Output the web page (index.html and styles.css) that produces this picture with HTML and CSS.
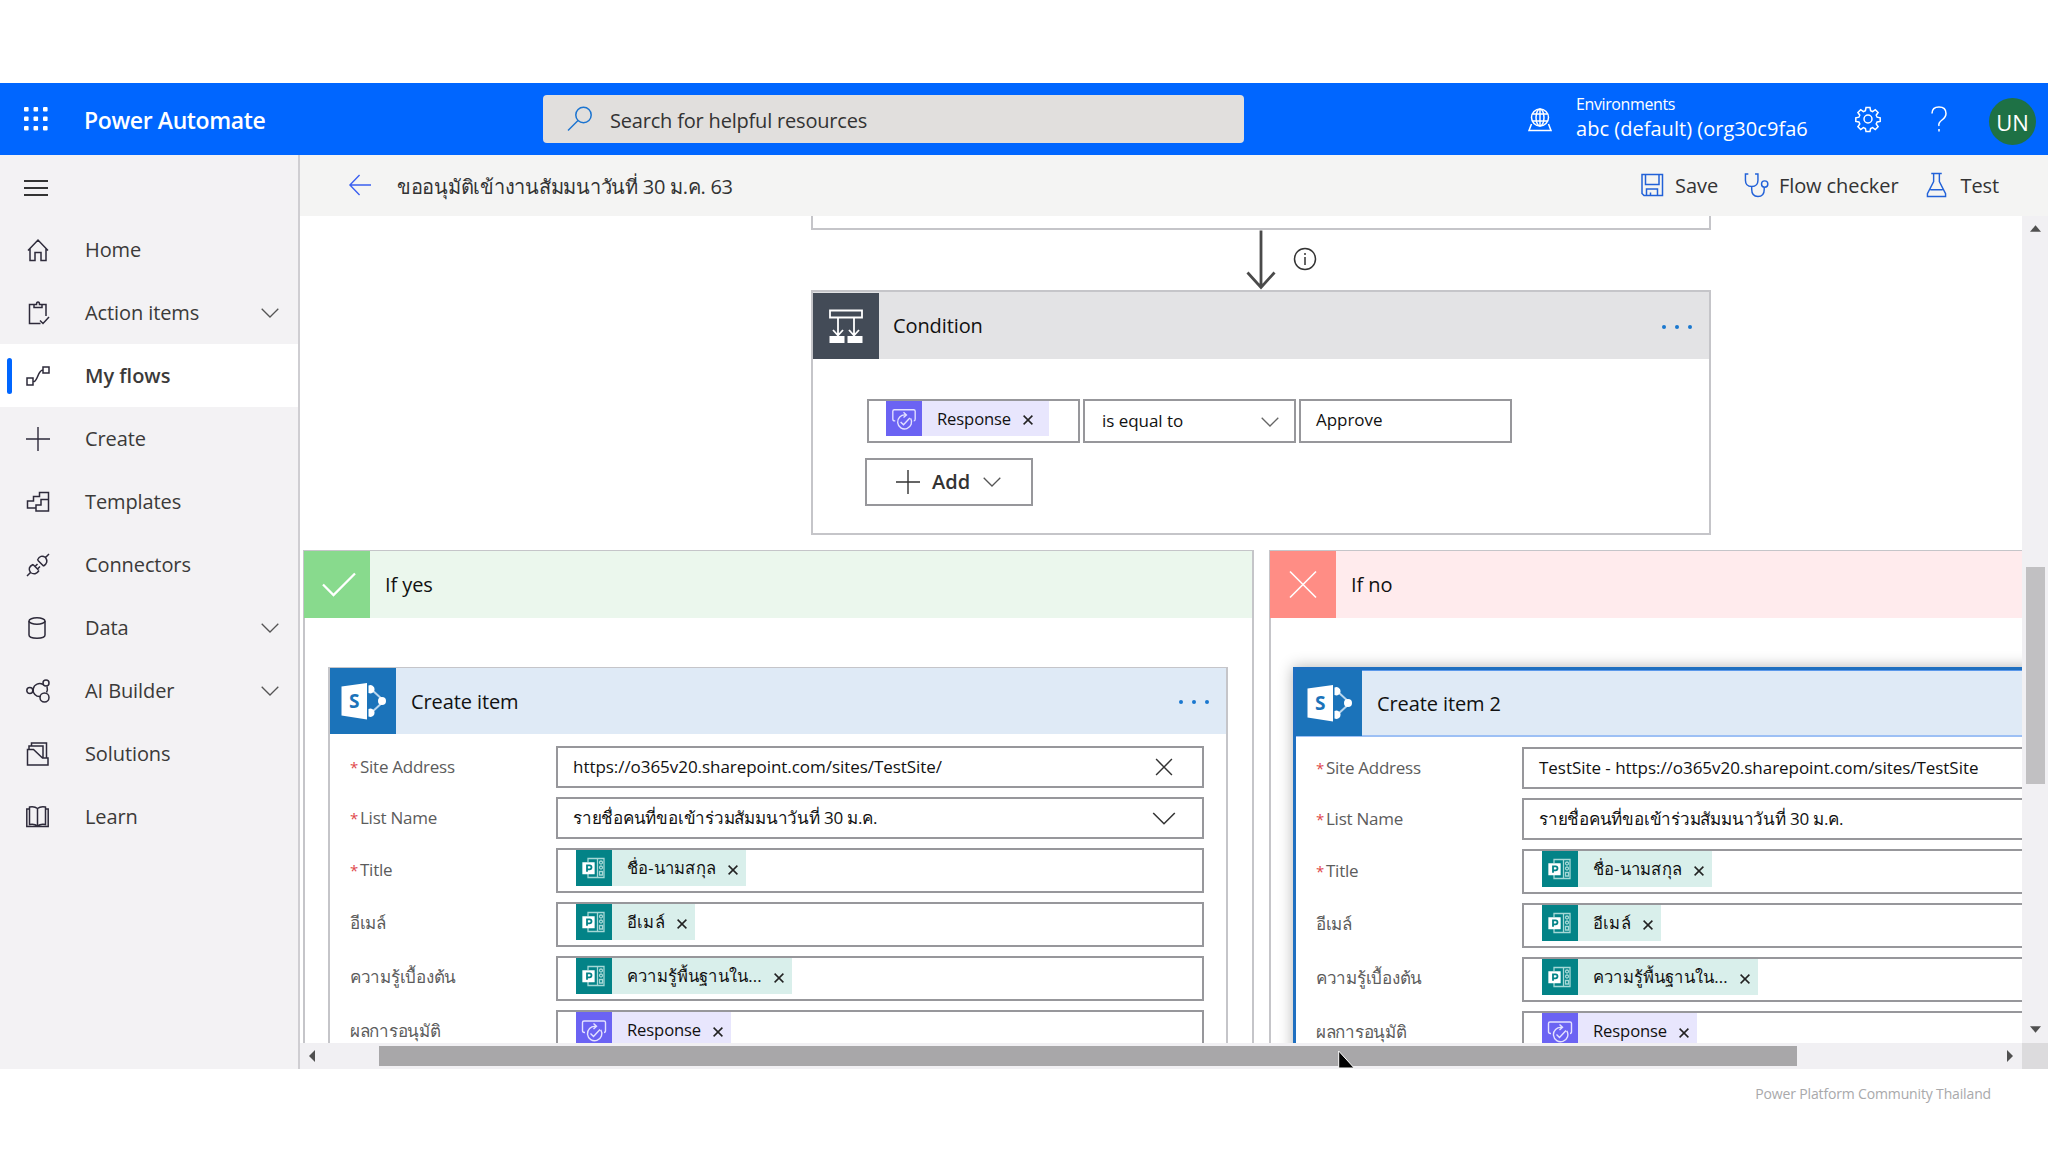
FILE: index.html
```html
<!DOCTYPE html>
<html lang="th">
<head>
<meta charset="utf-8">
<title>Power Automate</title>
<link rel="stylesheet" href="styles.css">
</head>
<body>
<svg class="sprite" aria-hidden="true">
  <symbol id="chev" viewBox="0 0 18 10"><path d="M.7.8 9 9 17.300.8"/></symbol>
  <symbol id="x" viewBox="0 0 10 10"><path d="M.6.6l8.800 8.800M9.400.6.6 9.400"/></symbol>
  <symbol id="plus" viewBox="0 0 24 24"><path d="M12 0v24M0 12h24"/></symbol>
  <symbol id="approval" viewBox="0 0 36 36">
    <path d="M9 20.500H8.500q-2 0-2-2v-8q0-1.500 1.500-1.500h20q1.500 0 1.500 1.500v8q0 2-1.500 2"/>
    <path d="M24.800 17.800a7.200 7.200 0 1 1-5.300-3.400M14.500 21.500l3 3 6.500-7M17.500 11.500l3 2.800-3 2.700"/>
  </symbol>
  <symbol id="forms" viewBox="0 0 36 36">
    <path d="M12 12V8.500h16v19H12V24M21.500 9v18"/>
    <circle cx="25" cy="12.500" r="1.500"/><circle cx="25" cy="17.500" r="1.500"/><path d="M23.500 21.500h3v3.500h-3z"/>
    <path d="M7 13h11v10.500H7z" fill="#fff" stroke="#fff"/>
    <path d="M11 21.800v-6.500h2.500a2 2 0 0 1 0 4H11" stroke="#038387" stroke-width="1.800"/>
  </symbol>
  <symbol id="sharepoint" viewBox="0 0 66 66">
    <path d="M11.500 18.500 37 15v36.500L11.500 47.500z" fill="#fff"/>
    <path d="M41 21 54 33 41 45" fill="none" stroke="#b9d6ee" stroke-width="2"/>
    <path d="M38.500 17.500a4.200 4.200 0 1 1 0 7.500zM38.500 41a4.200 4.200 0 1 1 0 7.500z" fill="#fff"/>
    <circle cx="52" cy="33" r="4" fill="#fff"/>
    <text x="19" y="40" font-size="19" font-weight="700" fill="#1b73ba">S</text>
  </symbol>
</svg>

<header class="top">
  <svg class="waffle" viewBox="0 0 24 24"><g fill="#fff"><rect width="4.600" height="4.600" rx="1"/><rect x="9.500" width="4.600" height="4.600" rx="1"/><rect x="19" width="4.600" height="4.600" rx="1"/><rect y="9.500" width="4.600" height="4.600" rx="1"/><rect x="9.500" y="9.500" width="4.600" height="4.600" rx="1"/><rect x="19" y="9.500" width="4.600" height="4.600" rx="1"/><rect y="19" width="4.600" height="4.600" rx="1"/><rect x="9.500" y="19" width="4.600" height="4.600" rx="1"/><rect x="19" y="19" width="4.600" height="4.600" rx="1"/></g></svg>
  <span class="brand">Power Automate</span>
  <div class="search">
    <svg class="line" viewBox="0 0 26 26"><circle cx="16.500" cy="9" r="7.700"/><path d="M11 14.500 1 24.500"/></svg>
    <span>Search for helpful resources</span>
  </div>
  <svg class="line globe" viewBox="0 0 24 24"><circle cx="12" cy="9.500" r="8.500"/><ellipse cx="12" cy="9.500" rx="4" ry="8.500"/><path d="M4.500 6h15M4.500 13h15M12 1v17"/><path d="M3.500 16 1 22.500h22L20.500 16"/></svg>
  <div class="env"><span class="env-label">Environments</span><span>abc (default) (org30c9fa6</span></div>
  <svg class="line gear" viewBox="0 0 26 26"><path d="M11 1.500h4l.6 3.200 2 .9 2.700-1.900 2.800 2.800-1.900 2.700.9 2 3.100.6v3.600l-3.100.6-.9 2 1.900 2.700-2.800 2.800-2.700-1.900-2 .9-.6 3h-4l-.6-3-2-.9-2.700 1.900-2.800-2.800 1.900-2.700-.9-2-3.100-.6v-3.600l3.100-.6.9-2-1.900-2.700 2.800-2.800 2.700 1.900 2-.9z"/><circle cx="13" cy="13" r="4"/></svg>
  <svg class="line help" viewBox="0 0 16 26"><path d="M1 7.500Q1 1 8 1t7 6.500Q15 11 11 14t-3 6"/><path d="M8 23v2.500"/></svg>
  <span class="avatar">UN</span>
</header>

<div class="shell">
  <nav class="side">
    <div class="burger"><i></i><i></i><i></i></div>
    <a class="item"><svg class="line" viewBox="0 0 24 24"><path d="M2 12.500 12 2l10 10.500M4 10.800V22.500h5v-8h6v8h5V10.800"/></svg><span>Home</span></a>
    <a class="item"><svg class="line" viewBox="0 0 24 24"><path d="M20 15V3.500h-4M8 3.500H3.500v19h11M8 6.500v-3h2.500q0-2.500 1.500-2.500t1.500 2.500H16v3zM14 19.500l3 3 6-6.500"/></svg><span>Action items</span><svg class="line chev"><use href="#chev"/></svg></a>
    <a class="item on"><svg class="line" viewBox="0 0 24 24"><path d="M1 14h6v7H1zM17 3h6v6h-6zM7 18c5 0 4.500-12 10-12"/></svg><span>My flows</span></a>
    <a class="item"><svg class="line thin" viewBox="0 0 24 24"><use href="#plus"/></svg><span>Create</span></a>
    <a class="item"><svg class="line" viewBox="0 0 24 24"><path d="M10 18H1.500v-7h6V6.500h6v-4h9v18.500h-12.500v-6h5V9.500h7"/></svg><span>Templates</span></a>
    <a class="item"><svg class="line" viewBox="0 0 24 24"><path d="M1 23l3.500-3.500M23 1l-3.500 3.500M7 11.500l6 6M7 11.500q-6 3-2.500 8 5 3.500 8.500-2M11.500 7l6 6M11.500 7q3-6 8-2.500 3.500 5-2 8.500M9 13.500l2.500-2.500M11.500 16l2.500-2.500"/></svg><span>Connectors</span></a>
    <a class="item"><svg class="line" viewBox="0 0 24 24"><ellipse cx="11" cy="5" rx="8" ry="3.200"/><path d="M3 5v14q0 3.200 8 3.200t8-3.200V5"/></svg><span>Data</span><svg class="line chev"><use href="#chev"/></svg></a>
    <a class="item"><svg class="line" viewBox="0 0 24 24"><circle cx="3.800" cy="11.500" r="3"/><path d="M17 5.500a6.500 6.500 0 1 0-2.500 12M21 7.500q1 3.500-.5 6"/><circle cx="20" cy="4" r="3"/><circle cx="18.500" cy="18.500" r="4.500"/></svg><span>AI Builder</span><svg class="line chev"><use href="#chev"/></svg></a>
    <a class="item"><svg class="line" viewBox="0 0 24 24"><path d="M1.500 7.500h6l9 8.500h5.500v7H1.500zM3 7.500V4h14v12M5.500 4V1h15v15"/></svg><span>Solutions</span></a>
    <a class="item"><svg class="line" viewBox="0 0 24 24"><path d="M11.500 3.500q-3-2.500-8-1.500v17.500q5-1 8 1.500 3-2.500 8-1.500V2q-5-1-8 1.500v17.500M3.500 4H.8v17.500h21.400V4h-2.700"/></svg><span>Learn</span></a>
  </nav>

  <main class="main">
    <div class="bar">
      <svg class="line back" viewBox="0 0 24 24"><path d="M24 12H1.500M11.500 1 1 12l10.500 11"/></svg>
      <span class="title">ขออนุมัติเข้างานสัมมนาวันที่ 30 ม.ค. 63</span>
      <div class="cmds">
        <svg class="line" viewBox="0 0 24 24"><path d="M2 1.500h20.500v21H4L2 20.500zM5.500 1.500v10h13.500v-10M6.500 22.500v-6.500h11v6.500M10.500 22v-2.500"/></svg><span>Save</span>
        <svg class="line scope" viewBox="0 0 26 26"><path d="M4.500 1.500H1.500V8q0 6.500 6.500 6.500T14.500 8V1.500h-3M8 14.500v3q0 7.500 6.500 7.500T21 18v-2.500"/><circle cx="21.500" cy="12" r="3.300"/></svg><span>Flow checker</span>
        <svg class="line flask" viewBox="0 0 22 26"><path d="M5.500 1h11M8 1v8.500L1.500 22v3h19v-3L14 9.500V1M4.500 18h13"/></svg><span>Test</span>
      </div>
    </div>

    <div class="work">
      <div class="canvas">
        <div class="prev"></div>
        <div class="link">
          <svg class="arrow" viewBox="0 0 30 59"><path d="M15 0v56M1.500 42 15 57l13.500-15"/></svg>
          <svg class="info" viewBox="0 0 24 24"><circle cx="12" cy="12" r="10.500"/><path d="M12 10v8M12 6v2"/></svg>
        </div>

        <section class="card cond">
          <div class="head">
            <svg class="tile dark" viewBox="0 0 66 66"><g fill="none" stroke="#fff" stroke-width="1.800"><path d="M17 17.500h32v7H17zM25 25v17M41 25v17M20 37l5 5.500 5-5.500M36 37l5 5.500 5-5.500"/></g><path d="M16.500 43h15v7h-15zM34.500 43h15v7h-15z" fill="#fff"/></svg>
            <span>Condition</span><span class="dots"><i></i><i></i><i></i></span>
          </div>
          <div class="expr">
            <div class="box"><span class="chip violet"><svg><use href="#approval"/></svg><b>Response</b><svg class="rm"><use href="#x"/></svg></span></div>
            <div class="box sel"><span>is equal to</span><svg class="line chev"><use href="#chev"/></svg></div>
            <div class="box value"><span>Approve</span></div>
          </div>
          <div class="add"><svg class="line thin"><use href="#plus"/></svg><span>Add</span><svg class="line chev"><use href="#chev"/></svg></div>
        </section>

        <div class="branches">
          <section class="branch yes">
            <div class="head"><svg class="tile" viewBox="0 0 66 66"><path d="M19 33l10.500 10.500L51 22" fill="none" stroke="#fff" stroke-width="2.300"/></svg><span>If yes</span></div>
            <div class="card item-card">
              <div class="head"><svg class="tile sp"><use href="#sharepoint"/></svg><span>Create item</span><span class="dots"><i></i><i></i><i></i></span></div>
              <div class="fields">
                <label class="req">Site Address</label><div class="box low url"><span>https://o365v20.sharepoint.com/sites/TestSite/</span><svg class="line clear"><use href="#x"/></svg></div>
                <label class="req">List Name</label><div class="box low list"><span>รายชื่อคนที่ขอเข้าร่วมสัมมนาวันที่ 30 ม.ค.</span><svg class="line open"><use href="#chev"/></svg></div>
                <label class="req">Title</label><div class="box"><span class="chip teal"><svg><use href="#forms"/></svg><b>ชื่อ-นามสกุล</b><svg class="rm"><use href="#x"/></svg></span></div>
                <label>อีเมล์</label><div class="box"><span class="chip teal"><svg><use href="#forms"/></svg><b>อีเมล์</b><svg class="rm"><use href="#x"/></svg></span></div>
                <label>ความรู้เบื้องต้น</label><div class="box"><span class="chip teal"><svg><use href="#forms"/></svg><b>ความรู้พื้นฐานใน...</b><svg class="rm"><use href="#x"/></svg></span></div>
                <label>ผลการอนุมัติ</label><div class="box"><span class="chip violet"><svg><use href="#approval"/></svg><b>Response</b><svg class="rm"><use href="#x"/></svg></span></div>
              </div>
            </div>
          </section>
          <section class="branch no">
            <div class="head"><svg class="tile" viewBox="0 0 66 66"><path d="M20 20l26 26M46 20 20 46" fill="none" stroke="#fff" stroke-width="1.600"/></svg><span>If no</span></div>
            <div class="card item-card picked">
              <div class="head"><svg class="tile sp"><use href="#sharepoint"/></svg><span>Create item 2</span></div>
              <div class="fields">
                <label class="req">Site Address</label><div class="box low"><span>TestSite - https://o365v20.sharepoint.com/sites/TestSite</span></div>
                <label class="req">List Name</label><div class="box low list"><span>รายชื่อคนที่ขอเข้าร่วมสัมมนาวันที่ 30 ม.ค.</span></div>
                <label class="req">Title</label><div class="box"><span class="chip teal"><svg><use href="#forms"/></svg><b>ชื่อ-นามสกุล</b><svg class="rm"><use href="#x"/></svg></span></div>
                <label>อีเมล์</label><div class="box"><span class="chip teal"><svg><use href="#forms"/></svg><b>อีเมล์</b><svg class="rm"><use href="#x"/></svg></span></div>
                <label>ความรู้เบื้องต้น</label><div class="box"><span class="chip teal"><svg><use href="#forms"/></svg><b>ความรู้พื้นฐานใน...</b><svg class="rm"><use href="#x"/></svg></span></div>
                <label>ผลการอนุมัติ</label><div class="box"><span class="chip violet"><svg><use href="#approval"/></svg><b>Response</b><svg class="rm"><use href="#x"/></svg></span></div>
              </div>
            </div>
          </section>
        </div>
      </div>
      <div class="vbar"><svg viewBox="0 0 12 7"><path d="M0 7 6 0l6 7z"/></svg><i></i><svg viewBox="0 0 12 7"><path d="M0 0 6 7l6-7z"/></svg></div>
      <div class="hbar"><svg viewBox="0 0 6 12"><path d="M6 0 0 6l6 6z"/></svg><i></i><svg viewBox="0 0 6 12"><path d="M0 0l6 6-6 6z"/></svg></div>
      <div class="corner"></div>
      <svg class="cursor" viewBox="0 0 17 19"><path d="M.7 1v17h15.500z"/></svg>
    </div>
  </main>
</div>
<footer>Power Platform Community Thailand</footer>
</body>
</html>
```
FILE: styles.css
```css
* { box-sizing: border-box; }
body {
  margin: 0; padding-top: 83px; width: 2048px; height: 1152px; overflow: hidden;
  background: #fff; color: #222;
  font: 20px/26px "Open Sans", "Noto Sans", sans-serif; letter-spacing: -.1px;
}
svg { display: block; flex: none; overflow: visible; }
span, label, b { white-space: nowrap; }
.sprite { position: absolute; width: 0; height: 0; }
.line { fill: none; stroke: currentColor; stroke-width: 1.5; }
.thin { stroke-width: 1.4; }
.chev { width: 18px; height: 10px; color: #555; stroke-width: 1.3; }

/* header */
.top { display: flex; align-items: center; height: 72px; background: #06f; color: #fff; }
.waffle { width: 24px; height: 26px; margin-left: 24px; }
.brand { width: 459px; margin: 2px 0 0 36px; font-size: 23px; font-weight: 600; letter-spacing: -.38px; }
.search {
  display: flex; align-items: center; gap: 17px; width: 701px; height: 48px; padding-left: 24px;
  border-radius: 4px; background: #e1dfdd; color: #333; letter-spacing: -.19px;
}
.search svg { width: 26px; height: 26px; color: #1b74d0; }
.search span { margin-top: 3px; }
.globe { width: 24px; height: 24px; margin: 2px 0 0 284px; }
.env { display: flex; flex-direction: column; width: 279px; margin: -5px 0 0 24px; line-height: 25px; letter-spacing: .03px; }
.env-label { font-size: 16px; line-height: 23px; letter-spacing: -.38px; }
.gear { width: 26px; height: 26px; margin-top: -1px; }
.help { width: 16px; height: 26px; margin-left: 50px; }
.avatar {
  width: 47px; height: 47px; margin: 4px 0 0 42px; border-radius: 50%; background: #1e7145;
  font-size: 22px; line-height: 48px; text-align: center;
}

/* sidebar */
.shell { display: flex; height: 914px; }
.side { width: 300px; border-right: 2px solid #cfced2; background: #f3f2f4; }
.burger { display: flex; flex-direction: column; gap: 5px; height: 63px; padding: 25px 0 0 24px; }
.burger i { width: 24px; height: 2px; background: #333; }
.item { display: flex; align-items: center; height: 63px; padding: 0 19px 0 26px; color: #3b3a39; }
.item span { flex: 1; margin: 1px 0 0 35px; }
.item svg:first-child { width: 24px; height: 24px; color: #2d2a3a; }
.item.on { padding-left: 7px; background: #fff; font-weight: 600; letter-spacing: 0; }
.item.on::before { content: ""; width: 5px; height: 36px; margin-right: 14px; border-radius: 3px; background: #06f; }

/* command bar */
.main { flex: 1; min-width: 0; }
.bar { display: flex; align-items: center; height: 61px; padding: 0 49px 0 48px; background: #f4f4f3; }
.back { width: 24px; height: 22px; margin-top: -2px; color: #3a5ff0; }
.title { flex: 1; margin: 2px 0 0 25px; color: #333; letter-spacing: -.26px; }
.cmds { display: flex; align-items: center; color: #333; }
.cmds span { margin-top: 1px; }
.cmds svg { width: 24px; height: 24px; margin: -1px 11px 0 0; color: #2161d8; }
.cmds .scope { width: 25px; height: 26px; margin: -1px 10px 0 26px; }
.cmds .flask { width: 21px; height: 26px; margin: -1px 13px 0 28px; }

/* workspace */
.work { position: relative; display: grid; grid-template: 827px 26px / 1722px 26px; }
.canvas { overflow: hidden; background: #fff; color: #111; }
.prev { width: 900px; height: 14px; margin-left: 511px; border: 2px solid #c5c5c9; border-top: 0; }
.link { display: flex; height: 60px; padding-left: 946px; }
.arrow { width: 30px; height: 60px; fill: none; stroke: #4a4a4a; stroke-width: 2.8; }
.info { width: 24px; height: 24px; margin: 17px 0 0 17px; fill: none; stroke: #333; stroke-width: 1.5; }

.head { display: flex; align-items: center; }
.head span:not(.dots) { flex: 1; margin: 1px 0 0 15px; }
.tile { width: 66px; height: 66px; }
.dark { background: #434b57; }
.sp { background: #1b73ba; }
.dots { display: flex; gap: 9px; margin: 2px 17px 0 0; }
.dots i { width: 4px; height: 4px; border-radius: 50%; background: #1a78cf; }

.card { border: 2px solid #c5c5c9; background: #fff; }
.cond { width: 900px; height: 245px; margin-left: 511px; }
.cond .head { height: 67px; background: #e3e3e5; }
.cond .head span:not(.dots) { margin-left: 14px; }
.expr { display: flex; gap: 3px; margin: 40px 0 0 54px; }
.box {
  display: flex; align-items: center; height: 45px; padding-left: 15px; border: 2px solid #97979b;
  background: #fff; color: #111; font-size: 17px; letter-spacing: -.04px;
}
.expr .box { width: 213px; height: 44px; }
.sel span { flex: 1; margin-left: 2px; }
.value span { margin-top: -3px; }
.sel .chev { margin: 2px 15px 0 0; color: #666; }
.add { display: flex; align-items: center; width: 168px; height: 48px; margin: 15px 0 0 52px; padding-left: 29px; border: 2px solid #97979b; color: #333; font-weight: 600; letter-spacing: .1px; }
.add svg:first-child { width: 24px; height: 24px; margin-right: 12px; }
.add .chev { margin-left: 13px; }

.chip { display: flex; align-items: center; align-self: flex-start; height: 35px; margin-left: 2px; }
.chip svg:first-child { width: 36px; height: 35px; margin-right: 15px; fill: none; stroke: #e4e2ff; stroke-width: 1.4; }
.chip b { font-size: 16.6px; font-weight: 400; letter-spacing: -.12px; }
.chip .rm { width: 10px; height: 10px; margin: 3px 8px 0 12px; fill: none; stroke: #222; stroke-width: 1.5; }
.expr .rm { margin-right: 16px; }
.violet { background: #e8e6fd; }
.violet svg:first-child { background: #6b63f3; }
.teal { background: #d9efeb; }
.teal b { letter-spacing: .18px; }
.teal svg:first-child { background: #038387; stroke: #a5d8d6; stroke-width: 1.3; }

/* branches */
.branches { display: flex; gap: 15px; width: 1920px; margin: 15px 0 0 3px; }
.branch { flex: none; width: 951px; height: 600px; border: solid #c5c5c9; border-width: 1px 2px; }
.branch > .head { height: 67px; }
.branch .tile { margin-left: -1px; }
.yes > .head { background: #ebf7ed; }
.yes > .head .tile { height: 67px; background: #88da8d; }
.no > .head { background: #ffebed; }
.no > .head .tile { height: 67px; background: #ff8d85; }
.item-card { width: 900px; height: 540px; margin: 49px 0 0 23px; border-width: 1px 2px; }
.item-card .tile { margin-left: 0; }
.item-card .head { height: 66px; background: #dfeaf6; }
.fields { display: grid; grid-template-columns: 206px 648px; row-gap: 9px; align-items: center; padding: 12px 0 0 20px; }
.fields .box { height: 45px; }
.fields label { margin-top: -3px; color: #5c5c5c; font-size: 17px; letter-spacing: -.26px; }
.fields .req { margin-top: -1px; }
.fields .req::before { content: "*"; display: inline-block; width: 10px; color: #e0484a; font-size: 15px; letter-spacing: 0; }
.fields .low { height: 42px; }
.fields .chip { height: 36px; margin-left: 3px; }
.fields .chip svg:first-child { height: 36px; }
.low span { flex: 1; }
.url span { letter-spacing: -.05px; }
.list span { letter-spacing: -.22px; }
.clear { width: 18px; height: 18px; margin-right: 29px; stroke-width: .8; color: #333; }
.open { width: 24px; height: 13px; margin-right: 26px; stroke-width: 1.2; color: #333; }
.picked { margin-left: 22px; border: 3px solid #1f6fc0; box-shadow: 0 0 14px rgba(0, 0, 0, .3); }
.picked .head { height: 67px; border-top: 1px solid #5b98ea; border-bottom: 2px solid #9dc0f5; }
.picked .fields { padding: 10px 0 0 20px; }

/* scroll bars */
.vbar { display: flex; flex-direction: column; align-items: center; padding: 9px 1px 10px 2px; background: #f1f0f3; }
.vbar svg { width: 11px; height: 7px; fill: #505050; }
.vbar i { width: 19px; height: 217px; margin: 335px 0 auto; background: #c1c0c2; }
.hbar { display: flex; align-items: center; padding: 0 9px; background: #f1f0f3; }
.hbar svg { width: 6px; height: 12px; fill: #505050; }
.hbar i { width: 1418px; height: 20px; margin: 0 auto 0 64px; background: #a8a7a9; }
.corner { background: #dcdbdd; }
.cursor { position: absolute; left: 1038px; top: 834px; width: 17px; height: 19px; stroke: #fff; stroke-width: 1; }

footer { margin-top: 12px; padding-right: 57px; color: #a9a9ab; font-size: 14px; letter-spacing: -.15px; text-align: right; }
```
